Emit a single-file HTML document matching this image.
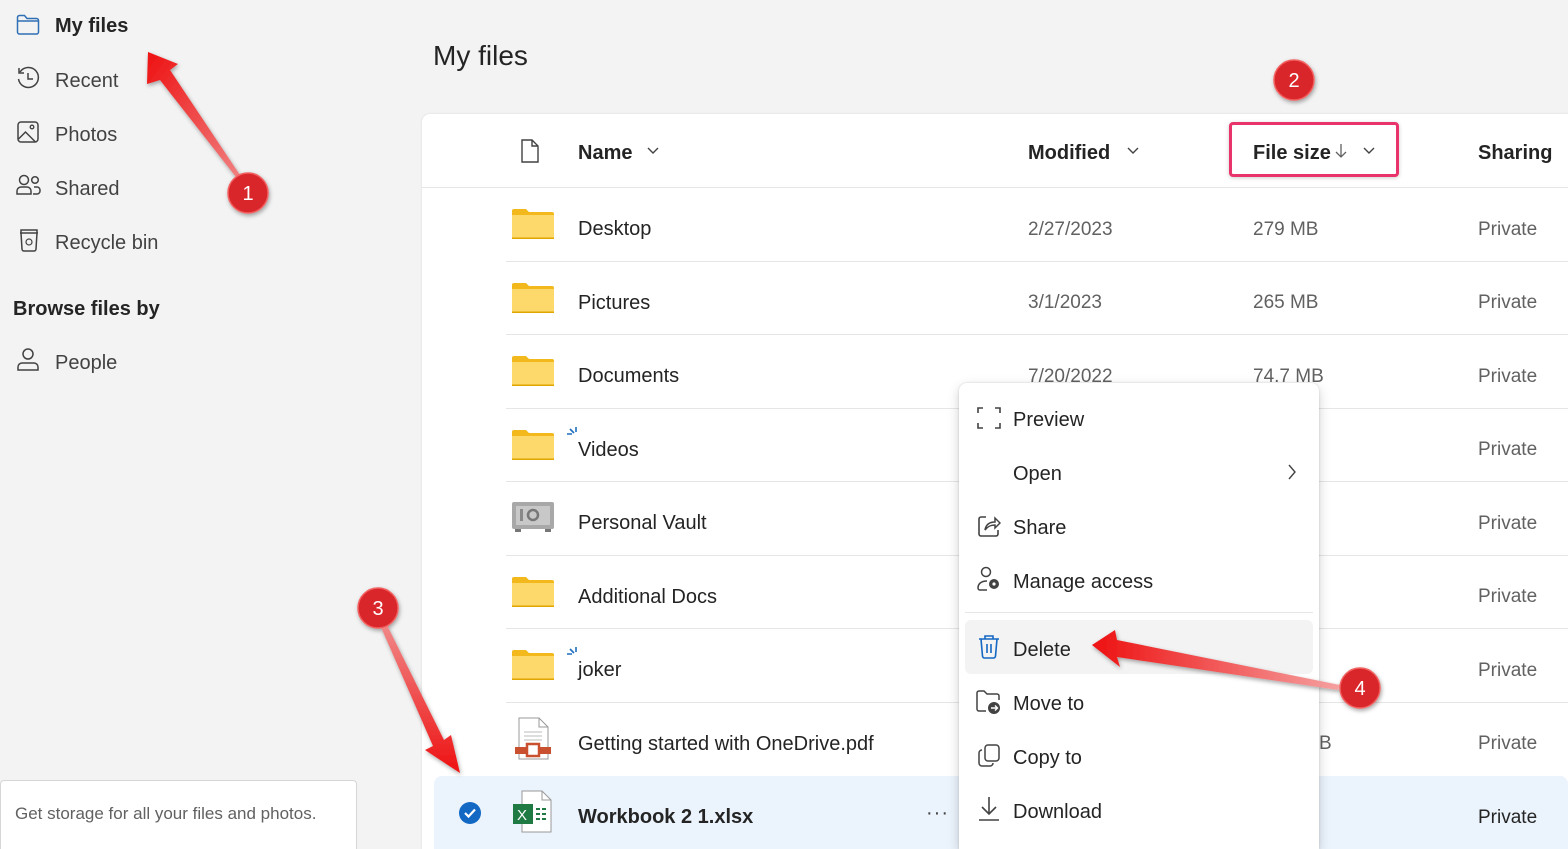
<!DOCTYPE html>
<html><head><meta charset="utf-8"><style>
*{margin:0;padding:0;box-sizing:border-box}
html,body{width:1568px;height:849px;overflow:hidden}
body{background:#f3f3f3;font-family:"Liberation Sans",sans-serif;color:#242424;position:relative}
.a{position:absolute;white-space:nowrap}
.nav{font-size:20px;color:#424242}
.ic{position:absolute}
.card{position:absolute;left:422px;top:114px;width:1146px;height:735px;background:#fff;border-radius:8px 0 0 0;box-shadow:0 0 2px rgba(0,0,0,.12)}
.hd{font-size:20px;color:#242424;font-weight:bold}
.row{position:absolute;left:506px;width:1062px;height:1px;background:#e6e6e6}
.fn{font-size:20px;color:#242424}
.md{font-size:19px;color:#616161}
.folder{position:absolute;width:42px;height:30px}
.menu{position:absolute;left:959px;top:383px;width:360px;height:466px;background:#fff;border-radius:8px 8px 0 0;box-shadow:0 4px 12px rgba(0,0,0,.18),0 0 2px rgba(0,0,0,.15)}
.mi{font-size:20px;color:#242424}
</style></head><body>

<svg class="ic" style="left:16px;top:14px" width="24" height="22" viewBox="0 0 24 22"><path d="M1.5 3.5a2 2 0 0 1 2-2h5l2.5 3h9.5a2 2 0 0 1 2 2v11.5a2 2 0 0 1-2 2h-17a2 2 0 0 1-2-2z M1.5 7h21" fill="none" stroke="#2f6fb3" stroke-width="1.5"/></svg>
<div class="a" style="left:55px;top:15px;font-size:20px;font-weight:bold;color:#242424">My files</div>
<svg class="ic" style="left:16px;top:66px" width="25" height="25" viewBox="0 0 25 25"><path d="M4 6a10 10 0 1 1-1.5 7" fill="none" stroke="#424242" stroke-width="1.5"/><path d="M3 2v5h5M12 7v6h5" fill="none" stroke="#424242" stroke-width="1.5"/></svg>
<div class="a nav" style="left:55px;top:70px">Recent</div>
<svg class="ic" style="left:17px;top:121px" width="22" height="22" viewBox="0 0 22 22"><rect x="1" y="1" width="20" height="20" rx="3" fill="none" stroke="#424242" stroke-width="1.5"/><path d="M1.5 18l7-7 10 10" fill="none" stroke="#424242" stroke-width="1.5"/><circle cx="15" cy="6" r="1.8" fill="none" stroke="#424242" stroke-width="1.3"/></svg>
<div class="a nav" style="left:55px;top:124px">Photos</div>
<svg class="ic" style="left:16px;top:174px" width="25" height="22" viewBox="0 0 25 22"><circle cx="8" cy="6" r="4.5" fill="none" stroke="#424242" stroke-width="1.5"/><path d="M1 20v-3a4 4 0 0 1 4-4h6a4 4 0 0 1 4 4v3z" fill="none" stroke="#424242" stroke-width="1.5"/><circle cx="19" cy="6" r="3.3" fill="none" stroke="#424242" stroke-width="1.5"/><path d="M17 20h4a3 3 0 0 0 3-3v-1a3 3 0 0 0-3-3h-3" fill="none" stroke="#424242" stroke-width="1.5"/></svg>
<div class="a nav" style="left:55px;top:178px">Shared</div>
<svg class="ic" style="left:18px;top:228px" width="22" height="24" viewBox="0 0 22 24"><path d="M2 5h18M3 5l1 16a2 2 0 0 0 2 2h10a2 2 0 0 0 2-2l1-16M3 5V2h16v3" fill="none" stroke="#424242" stroke-width="1.5"/><circle cx="11" cy="14" r="3" fill="none" stroke="#424242" stroke-width="1.2"/></svg>
<div class="a nav" style="left:55px;top:232px">Recycle bin</div>
<div class="a" style="left:13px;top:298px;font-size:20px;font-weight:bold;color:#242424">Browse files by</div>
<svg class="ic" style="left:17px;top:348px" width="22" height="24" viewBox="0 0 22 24"><circle cx="11" cy="6" r="5" fill="none" stroke="#424242" stroke-width="1.5"/><path d="M1 22v-3a4 4 0 0 1 4-4h12a4 4 0 0 1 4 4v3z" fill="none" stroke="#424242" stroke-width="1.5"/></svg>
<div class="a nav" style="left:55px;top:352px">People</div>

<div class="a" style="left:0;top:780px;width:357px;height:80px;background:#fff;border:1px solid #d6d6d6;border-radius:4px"></div>
<div class="a" style="left:15px;top:804px;font-size:17px;color:#616161">Get storage for all your files and photos.</div>

<div class="a" style="left:433px;top:40px;font-size:28px;color:#242424">My files</div>

<div class="card"></div>
<div class="a" style="left:422px;top:187px;width:1146px;height:1px;background:#e6e6e6"></div>
<svg class="ic" style="left:520px;top:139px" width="20" height="24" viewBox="0 0 20 24"><path d="M2 1h10l6 6v16H2z M12 1v6h6" fill="none" stroke="#424242" stroke-width="1.4"/></svg>
<div class="a hd" style="left:578px;top:142px">Name</div>
<svg class="ic" style="left:646px;top:146px" width="14" height="10"><path d="M2 2l5 5 5-5" fill="none" stroke="#424242" stroke-width="1.4"/></svg>
<div class="a hd" style="left:1028px;top:142px">Modified</div>
<svg class="ic" style="left:1126px;top:146px" width="14" height="10"><path d="M2 2l5 5 5-5" fill="none" stroke="#424242" stroke-width="1.4"/></svg>
<div class="a hd" style="left:1253px;top:142px">File size</div>
<svg class="ic" style="left:1334px;top:143px" width="14" height="16"><path d="M7 1v13M2 9l5 5 5-5" fill="none" stroke="#616161" stroke-width="1.3"/></svg>
<svg class="ic" style="left:1362px;top:146px" width="14" height="10"><path d="M2 2l5 5 5-5" fill="none" stroke="#424242" stroke-width="1.4"/></svg>
<div class="a hd" style="left:1478px;top:142px">Sharing</div>
<div class="a" style="left:1229px;top:122px;width:170px;height:55px;border:3.5px solid #e8336b;border-radius:4px;box-shadow:0 1px 4px rgba(0,0,0,.2)"></div>

<div class="row" style="top:261px"></div>
<div class="row" style="top:334px"></div>
<div class="row" style="top:408px"></div>
<div class="row" style="top:481px"></div>
<div class="row" style="top:555px"></div>
<div class="row" style="top:628px"></div>
<div class="row" style="top:702px"></div>
<div class="a" style="left:434px;top:776px;width:1134px;height:80px;background:#ebf3fc;border-radius:8px"></div>

<svg width="0" height="0" style="position:absolute"><defs><symbol id="f" viewBox="0 0 42 30"><path d="M0 2a2 2 0 0 1 2-2h12l3 3H40a2 2 0 0 1 2 2v23a2 2 0 0 1-2 2H2a2 2 0 0 1-2-2z" fill="#f3b81c"/><path d="M0 6h42v22a2 2 0 0 1-2 2H2a2 2 0 0 1-2-2z" fill="#fdd86a"/><rect x="0" y="28.5" width="42" height="1.5" fill="#e0a500"/></symbol></defs></svg>
<svg class="folder" style="left:512px;top:209px"><use href="#f"/></svg>
<svg class="folder" style="left:512px;top:283px"><use href="#f"/></svg>
<svg class="folder" style="left:512px;top:356px"><use href="#f"/></svg>
<svg class="folder" style="left:512px;top:430px"><use href="#f"/></svg>
<svg class="folder" style="left:512px;top:577px"><use href="#f"/></svg>
<svg class="folder" style="left:512px;top:650px"><use href="#f"/></svg>
<svg class="ic" style="left:566px;top:426px" width="14" height="14"><path d="M1 8h5M4 3l4 4M10 1v5" stroke="#1e6fbf" stroke-width="1.6"/></svg>
<svg class="ic" style="left:566px;top:646px" width="14" height="14"><path d="M1 8h5M4 3l4 4M10 1v5" stroke="#1e6fbf" stroke-width="1.6"/></svg>
<svg class="ic" style="left:511px;top:501px" width="44" height="32" viewBox="0 0 44 32"><rect x="1" y="1" width="42" height="27" rx="2" fill="#a8a8a8"/><rect x="5" y="5" width="34" height="19" fill="#c8c8c8"/><circle cx="22" cy="14" r="5" fill="none" stroke="#777" stroke-width="2.5"/><rect x="9" y="8" width="3" height="12" fill="#888"/><rect x="4" y="28" width="6" height="3" fill="#777"/><rect x="34" y="28" width="6" height="3" fill="#777"/></svg>
<svg class="ic" style="left:514px;top:717px" width="38" height="44" viewBox="0 0 38 44"><path d="M5 1h20l9 9v32H5z" fill="#fff" stroke="#999"/><path d="M25 1v9h9" fill="none" stroke="#999"/><path d="M10 15h18M10 19h18M10 23h18" stroke="#bbb"/><rect x="1" y="30" width="36" height="7" fill="#c9512f"/><rect x="13" y="27" width="12" height="12" fill="#fff" stroke="#c9512f" stroke-width="2.5"/></svg>
<svg class="ic" style="left:512px;top:790px" width="42" height="44" viewBox="0 0 42 44"><path d="M10 1h20l9 9v32H10z" fill="#fff" stroke="#999"/><path d="M30 1v9h9" fill="none" stroke="#999"/><rect x="1" y="14" width="20" height="20" fill="#1f7a43"/><text x="5" y="30" font-size="15" fill="#fff" font-family="Liberation Sans">X</text><path d="M24 19h4M30 19h4M24 24h4M30 24h4M24 29h4M30 29h4" stroke="#1f7a43" stroke-width="2"/></svg>
<svg class="ic" style="left:458px;top:801px" width="24" height="24"><circle cx="12" cy="12" r="11" fill="#1368c4"/><path d="M7 12l3.5 3.5 6.5-7" fill="none" stroke="#fff" stroke-width="2.2"/></svg>
<div class="a" style="left:926px;top:802px;font-size:20px;color:#424242;letter-spacing:1px">&middot;&middot;&middot;</div>

<div class="a fn" style="left:578px;top:218px">Desktop</div>
<div class="a fn" style="left:578px;top:292px">Pictures</div>
<div class="a fn" style="left:578px;top:365px">Documents</div>
<div class="a fn" style="left:578px;top:439px">Videos</div>
<div class="a fn" style="left:578px;top:512px">Personal Vault</div>
<div class="a fn" style="left:578px;top:586px">Additional Docs</div>
<div class="a fn" style="left:578px;top:659px">joker</div>
<div class="a fn" style="left:578px;top:733px">Getting started with OneDrive.pdf</div>
<div class="a fn" style="left:578px;top:806px;font-weight:bold">Workbook 2 1.xlsx</div>

<div class="a md" style="left:1028px;top:219px">2/27/2023</div>
<div class="a md" style="left:1253px;top:219px">279 MB</div>
<div class="a md" style="left:1028px;top:292px">3/1/2023</div>
<div class="a md" style="left:1253px;top:292px">265 MB</div>
<div class="a md" style="left:1028px;top:366px">7/20/2022</div>
<div class="a md" style="left:1253px;top:366px">74.7 MB</div>
<div class="a md" style="left:1478px;top:219px">Private</div>
<div class="a md" style="left:1478px;top:292px">Private</div>
<div class="a md" style="left:1478px;top:366px">Private</div>
<div class="a md" style="left:1478px;top:439px">Private</div>
<div class="a md" style="left:1478px;top:513px">Private</div>
<div class="a md" style="left:1478px;top:586px">Private</div>
<div class="a md" style="left:1478px;top:660px">Private</div>
<div class="a md" style="left:1478px;top:733px">Private</div>
<div class="a md" style="left:1478px;top:807px;color:#242424">Private</div>
<div class="a md" style="left:1319px;top:733px">B</div>

<div class="menu"></div>
<div class="a" style="left:965px;top:612px;width:348px;height:1px;background:#e6e6e6"></div>
<div class="a" style="left:965px;top:620px;width:348px;height:54px;background:#f3f3f3;border-radius:6px"></div>
<svg class="ic" style="left:977px;top:406px" width="24" height="24"><path d="M1 7V2h5M18 2h5v5M23 17v5h-5M6 22H1v-5" fill="none" stroke="#424242" stroke-width="1.6"/></svg>
<div class="a mi" style="left:1013px;top:409px">Preview</div>
<div class="a mi" style="left:1013px;top:463px">Open</div>
<svg class="ic" style="left:1286px;top:463px" width="12" height="18"><path d="M3 2l6 7-6 7" fill="none" stroke="#424242" stroke-width="1.4"/></svg>
<svg class="ic" style="left:977px;top:514px" width="24" height="24"><path d="M9 3H4a2 2 0 0 0-2 2v15a2 2 0 0 0 2 2h15a2 2 0 0 0 2-2v-4" fill="none" stroke="#424242" stroke-width="1.6"/><path d="M8 16c1-6 5-8 10-8V4l5 5-5 5v-3c-4 0-7 1-10 5z" fill="none" stroke="#424242" stroke-width="1.5"/></svg>
<div class="a mi" style="left:1013px;top:517px">Share</div>
<svg class="ic" style="left:976px;top:566px" width="26" height="26"><circle cx="10" cy="6" r="4.5" fill="none" stroke="#424242" stroke-width="1.5"/><path d="M11 24H4a2 2 0 0 1-2-2c0-4 3-7 9-7" fill="none" stroke="#424242" stroke-width="1.5"/><circle cx="18" cy="18" r="5" fill="#424242"/><circle cx="18" cy="18" r="1.6" fill="#fff"/></svg>
<div class="a mi" style="left:1013px;top:571px">Manage access</div>
<svg class="ic" style="left:977px;top:634px" width="24" height="26"><path d="M2 5h20M4 5l1.5 17a2 2 0 0 0 2 2h9a2 2 0 0 0 2-2L20 5M8 5V2h8v3M10 10v9M14 10v9" fill="none" stroke="#1568c4" stroke-width="1.6"/></svg>
<div class="a mi" style="left:1013px;top:639px">Delete</div>
<svg class="ic" style="left:976px;top:689px" width="26" height="26"><path d="M10 22H3a2 2 0 0 1-2-2V4a2 2 0 0 1 2-2h5l3 3h10a2 2 0 0 1 2 2v4" fill="none" stroke="#424242" stroke-width="1.5"/><circle cx="18" cy="19" r="6" fill="#424242"/><path d="M15 19h6M19 16.5l2.5 2.5-2.5 2.5" fill="none" stroke="#fff" stroke-width="1.4"/></svg>
<div class="a mi" style="left:1013px;top:693px">Move to</div>
<svg class="ic" style="left:977px;top:744px" width="24" height="24"><rect x="8" y="1" width="14" height="16" rx="3" fill="none" stroke="#424242" stroke-width="1.5"/><path d="M5 6a3 3 0 0 0-3 3v10a3 3 0 0 0 3 3h8a3 3 0 0 0 3-3" fill="none" stroke="#424242" stroke-width="1.5"/></svg>
<div class="a mi" style="left:1013px;top:747px">Copy to</div>
<svg class="ic" style="left:977px;top:796px" width="24" height="26"><path d="M12 1v17M5 11l7 7 7-7M2 24h20" fill="none" stroke="#424242" stroke-width="1.6"/></svg>
<div class="a mi" style="left:1013px;top:801px">Download</div>

<svg class="ic" style="left:0;top:0" width="1568" height="849">
<defs>
<linearGradient id="g1" x1="0" y1="0" x2="1" y2="1"><stop offset="0" stop-color="#ee1111"/><stop offset="1" stop-color="#f08080"/></linearGradient>
<linearGradient id="g4" x1="0" y1="0" x2="1" y2="0"><stop offset="0" stop-color="#ee1111"/><stop offset="1" stop-color="#f5a0a0"/></linearGradient>
<linearGradient id="g3" x1="0" y1="0" x2="0" y2="1"><stop offset="0" stop-color="#f08a8a"/><stop offset="1" stop-color="#ee1111"/></linearGradient>
<filter id="sh"><feDropShadow dx="1" dy="2" stdDeviation="2" flood-opacity=".35"/></filter>
</defs>
<g filter="url(#sh)">
<path d="M148 52L178 64 170 70 240 175 236 177 160 80 147 84z" fill="url(#g1)"/>
<path d="M1092 645L1115 630 1117 640 1340 685 1338 690 1117 657 1120 667z" fill="url(#g4)"/>
<path d="M460 773L425 750 433 746 380 625 386 623 444 740 451 735z" fill="url(#g3)"/>
<circle cx="248" cy="193" r="20" fill="#d9252a" stroke="#f26060" stroke-width="1.5"/>
<circle cx="1294" cy="80" r="20" fill="#d9252a" stroke="#f26060" stroke-width="1.5"/>
<circle cx="378" cy="608" r="20" fill="#d9252a" stroke="#f26060" stroke-width="1.5"/>
<circle cx="1360" cy="688" r="20" fill="#d9252a" stroke="#f26060" stroke-width="1.5"/>
</g>
<g fill="#fff" font-family="Liberation Sans" font-size="20" text-anchor="middle">
<text x="248" y="200">1</text><text x="1294" y="87">2</text><text x="378" y="615">3</text><text x="1360" y="695">4</text></g>
</svg>
</body></html>
